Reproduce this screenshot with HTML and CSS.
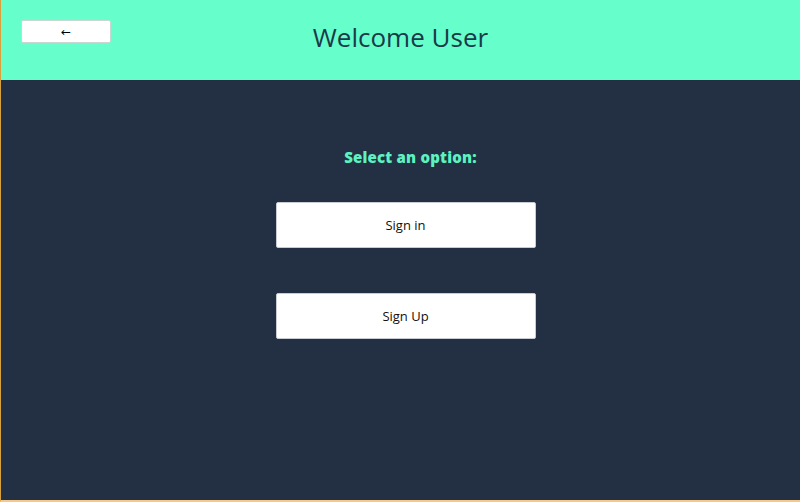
FILE: index.html
```html
<!DOCTYPE html>
<html lang="en">
<head>
<meta charset="utf-8">
<title>Welcome User</title>
<link rel="stylesheet" href="styles.css">
</head>
<body>
<div class="frame">
  <header class="topbar">
    <div class="topbar-left">
      <button class="back-btn" type="button">&larr;</button>
    </div>
    <h1 class="title">Welcome User</h1>
    <div class="topbar-right"></div>
  </header>
  <main class="content">
    <p class="prompt">Select an option:</p>
    <div class="options">
      <button class="option-btn" type="button">Sign in</button>
      <button class="option-btn" type="button">Sign Up</button>
    </div>
  </main>
</div>
</body>
</html>
```

FILE: styles.css
```css
html, body {
  margin: 0;
  padding: 0;
  height: 100%;
}
body {
  background: #232f42;
  font-family: "Open Sans", "Noto Sans", sans-serif;
}
.frame {
  box-sizing: border-box;
  height: 502px;
  display: flex;
  flex-direction: column;
  border-left: 1px solid #d7a23e;
  border-bottom: 2px solid #f5c88c;
  background: #232f42;
}
.topbar {
  height: 80px;
  flex: none;
  background: #66ffcc;
  display: grid;
  grid-template-columns: 1fr auto 1fr;
  align-items: start;
}
.topbar-left {
  padding: 20px 0 0 20px;
}
.back-btn {
  display: block;
  box-sizing: border-box;
  width: 90px;
  height: 23px;
  background: #fff;
  border: 1px solid #c9d6d2;
  border-radius: 2px;
  font-size: 12px;
  line-height: 1;
  color: #000;
  padding: 0;
  font-family: "DejaVu Sans", sans-serif;
}
.title {
  margin: 0;
  padding-top: 19px;
  font-family: "Open Sans", sans-serif;
  font-weight: 400;
  font-size: 26px;
  line-height: 36px;
  color: #1b3a48;
}
.content {
  flex: 1;
  padding-left: 10px;
  display: flex;
  flex-direction: column;
  align-items: center;
}
.prompt {
  margin: 67px 0 0 10px;
  font-family: "Open Sans", sans-serif;
  font-weight: 800;
  font-size: 15px;
  line-height: 20px;
  letter-spacing: 0.2px;
  color: #5ef2c3;
}
.options {
  margin-top: 35px;
  display: flex;
  flex-direction: column;
  gap: 45px;
}
.option-btn {
  width: 260px;
  height: 46px;
  background: #fff;
  border: 1px solid #c8ccd2;
  border-radius: 2px;
  font-family: "Open Sans", sans-serif;
  font-size: 13px;
  color: #111;
  padding: 0;
}
```
